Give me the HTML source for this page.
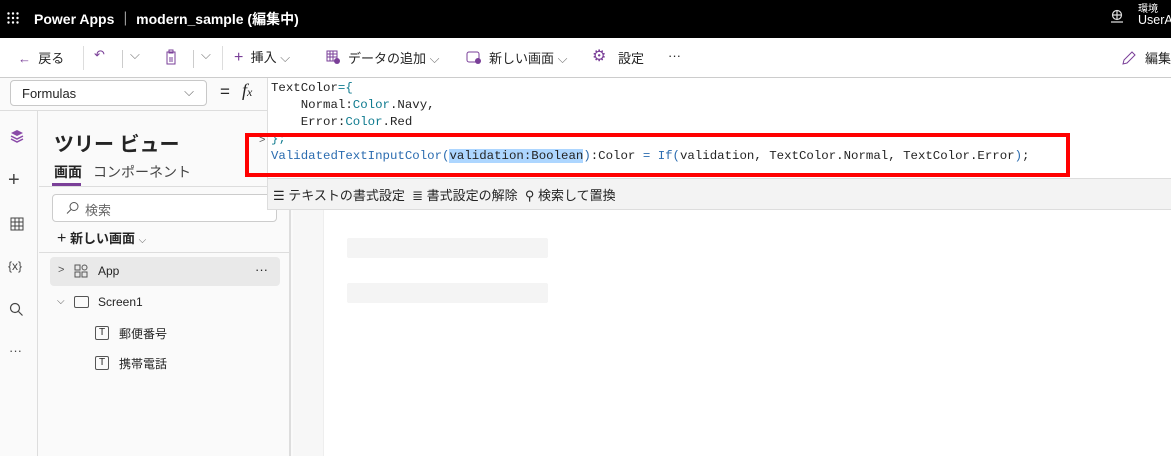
<!DOCTYPE html>
<html><head><meta charset="utf-8"><style>
*{box-sizing:border-box;margin:0;padding:0}
body{width:1171px;height:456px;overflow:hidden;background:#fff;font-family:"Liberation Sans","Noto Sans CJK JP",sans-serif;position:relative;color:#242424}
.a{position:absolute}
.mono{font-family:"Liberation Mono",monospace;font-size:12.4px;white-space:pre;line-height:17px}
.k{color:#0f7b8f}.b{color:#2b6cb0}
.tb{font-size:13px;color:#242424}
</style></head><body>
<!-- header -->
<div class="a" style="left:0;top:0;width:1171px;height:38px;background:#000"></div>
<svg class="a" style="top:12px;left:7px" width="12" height="12"><g fill="#fff"><circle cx="1.5" cy="1.5" r="1.2"/><circle cx="6" cy="1.5" r="1.2"/><circle cx="10.5" cy="1.5" r="1.2"/><circle cx="1.5" cy="6" r="1.2"/><circle cx="6" cy="6" r="1.2"/><circle cx="10.5" cy="6" r="1.2"/><circle cx="1.5" cy="10.5" r="1.2"/><circle cx="6" cy="10.5" r="1.2"/><circle cx="10.5" cy="10.5" r="1.2"/></g></svg>
<div class="a" style="left:34px;top:9px;color:#fff;font-size:14px;font-weight:bold">Power Apps ｜ modern_sample (編集中)</div>
<svg class="a" style="left:1109px;top:9px" width="16" height="16"><g fill="none" stroke="#ddd" stroke-width="1.2"><circle cx="8" cy="6" r="4.5"/><path d="M3.5 6h9M8 1.5v9M2 13h12"/></g></svg>
<div class="a" style="left:1138px;top:0px;color:#fff;font-size:10px">環境</div>
<div class="a" style="left:1138px;top:13px;color:#fff;font-size:12.5px">UserA</div>
<!-- toolbar -->
<div class="a tb" style="left:18px;top:48px"><span style="color:#7a3f98">←</span>&nbsp; 戻る</div>
<div class="a" style="left:83px;top:46px;width:1px;height:24px;background:#ddd"></div>
<div class="a tb" style="left:94px;top:47px;color:#7a3f98">↶</div>
<div class="a" style="left:122px;top:50px;width:1px;height:18px;background:#ccc"></div>
<div class="a tb" style="left:130px;top:47px;color:#777">⌵</div>
<svg class="a" style="left:164px;top:49px" width="14" height="16"><path d="M3 3h8v12H3z M5 1h4v3H5z M6 8v5M8 8v5" fill="none" stroke="#7a3f98" stroke-width="1"/></svg>
<div class="a" style="left:193px;top:50px;width:1px;height:18px;background:#ccc"></div>
<div class="a tb" style="left:201px;top:47px;color:#777">⌵</div>
<div class="a" style="left:222px;top:46px;width:1px;height:24px;background:#ddd"></div>
<div class="a tb" style="left:234px;top:47px"><span style="color:#7a3f98;font-size:16px">+</span>&nbsp; 挿入 <span style="color:#777">⌵</span></div>
<svg class="a" style="left:326px;top:50px" width="15" height="15"><path d="M1 1h10v10H1zM1 4h10M1 7h10M4 1v10M7 1v10" fill="none" stroke="#7a3f98"/><circle cx="11" cy="11" r="3" fill="#7a3f98"/></svg>
<div class="a tb" style="left:348px;top:48px">データの追加 <span style="color:#777">⌵</span></div>
<svg class="a" style="left:466px;top:50px" width="16" height="15"><rect x="1" y="2" width="12" height="10" rx="2" fill="none" stroke="#7a3f98"/><circle cx="12" cy="11" r="3" fill="#7a3f98"/></svg>
<div class="a tb" style="left:489px;top:48px">新しい画面 <span style="color:#777">⌵</span></div>
<div class="a" style="left:592px;top:46px;color:#7a3f98;font-size:16px">⚙</div>
<div class="a tb" style="left:618px;top:48px">設定</div>
<div class="a tb" style="left:668px;top:48px">···</div>
<svg class="a" style="left:1121px;top:50px" width="16" height="16"><path d="M2 14l1-4 8-8 3 3-8 8z" fill="none" stroke="#7a3f98"/></svg>
<div class="a tb" style="left:1145px;top:48px">編集</div>
<div class="a" style="left:0;top:77px;width:1171px;height:1px;background:#ccc"></div>
<!-- formula row -->
<div class="a" style="left:0;top:78px;width:1171px;height:378px;background:#fafafa"></div>
<div class="a" style="left:10px;top:80px;width:197px;height:26px;border:1px solid #c8c8c8;border-radius:4px;background:#fff;font-size:13px;padding:5px 0 0 11px">Formulas<span style="position:absolute;right:12px;top:3px;color:#666">⌵</span></div>
<div class="a" style="left:220px;top:82px;font-size:17px">=</div>
<div class="a" style="left:242px;top:80px;font-size:18px;font-style:italic;font-family:'Liberation Serif',serif">f<span style="font-size:12px">x</span></div>
<!-- left rail -->
<div class="a" style="left:0;top:111px;width:38px;height:345px;background:#fafafa;border-right:1px solid #ddd"></div>
<div class="a" style="left:0;top:110px;width:1171px;height:1px;background:#ddd"></div>
<svg class="a" style="left:10px;top:129px" width="14" height="14"><path d="M7 1l6 3-6 3-6-3z" fill="#8a4aa8"/><path d="M1 7l6 3 6-3M1 10l6 3 6-3" fill="none" stroke="#8a4aa8" stroke-width="1.5"/></svg>
<div class="a" style="left:8px;top:169px;font-size:20px;color:#444;font-weight:300">+</div>
<svg class="a" style="left:10px;top:217px" width="14" height="14"><path d="M1 1h12v12H1zM1 5h12M1 9h12M5 1v12M9 1v12" fill="none" stroke="#444"/></svg>
<div class="a" style="left:8px;top:259px;font-size:12px;color:#444">{x}</div>
<svg class="a" style="left:9px;top:302px" width="15" height="15"><circle cx="6" cy="6" r="4.5" fill="none" stroke="#444" stroke-width="1.2"/><path d="M9.5 9.5l4 4" stroke="#444" stroke-width="1.2"/></svg>
<div class="a" style="left:9px;top:343px;font-size:13px;color:#444">···</div>
<!-- tree -->
<div class="a" style="left:39px;top:111px;width:252px;height:345px;background:#fafafa;border-right:2px solid #ddd"></div>
<div class="a" style="left:54px;top:128px;font-size:20px;font-weight:bold">ツリー ビュー</div>
<div class="a" style="left:54px;top:162px;font-size:14px;font-weight:bold">画面</div>
<div class="a" style="left:52px;top:183px;width:29px;height:3px;background:#7a3f98"></div>
<div class="a" style="left:93px;top:162px;font-size:14px;color:#444">コンポーネント</div>
<div class="a" style="left:39px;top:186px;width:252px;height:1px;background:#ddd"></div>
<div class="a" style="left:52px;top:194px;width:225px;height:28px;border:1px solid #ccc;border-radius:4px;background:#fff;font-size:13px;color:#666;padding:5px 0 0 32px">検索</div>
<svg class="a" style="left:66px;top:201px" width="14" height="14"><circle cx="8" cy="5.5" r="4" fill="none" stroke="#555"/><path d="M5 8.5l-4 4" stroke="#555"/></svg>
<div class="a" style="left:57px;top:228px;font-size:13px;font-weight:bold"><span style="font-weight:normal;font-size:16px">+</span> 新しい画面 <span style="font-weight:normal;color:#666;font-size:10px">⌵</span></div>
<div class="a" style="left:39px;top:252px;width:252px;height:1px;background:#ddd"></div>
<div class="a" style="left:50px;top:257px;width:230px;height:29px;background:#e9e9e9;border-radius:4px"></div>
<div class="a" style="left:58px;top:264px;font-size:11px;color:#555">&gt;</div>
<svg class="a" style="left:74px;top:264px" width="14" height="14"><path d="M1 1h5v5H1zM1 8h5v5H1zM8 8h5v5H8z" fill="none" stroke="#555"/><circle cx="10.5" cy="3.5" r="2.5" fill="none" stroke="#555"/></svg>
<div class="a" style="left:98px;top:264px;font-size:12px">App</div>
<div class="a" style="left:255px;top:262px;font-size:13px">···</div>
<div class="a" style="left:57px;top:296px;font-size:10px;color:#555">⌵</div>
<div class="a" style="left:74px;top:296px;width:15px;height:12px;border:1px solid #555;border-radius:2px"></div>
<div class="a" style="left:98px;top:295px;font-size:12px">Screen1</div>
<div class="a" style="left:95px;top:326px;width:14px;height:14px;border:1px solid #555;border-radius:2px;font-size:10px;text-align:center;line-height:12px">T</div>
<div class="a" style="left:119px;top:325px;font-size:12px">郵便番号</div>
<div class="a" style="left:95px;top:356px;width:14px;height:14px;border:1px solid #555;border-radius:2px;font-size:10px;text-align:center;line-height:12px">T</div>
<div class="a" style="left:119px;top:355px;font-size:12px">携帯電話</div>
<!-- canvas -->
<div class="a" style="left:293px;top:210px;width:31px;height:246px;background:#f7f7f7;border-right:1px solid #eee"></div>
<div class="a" style="left:324px;top:210px;width:847px;height:246px;background:#fff"></div>
<div class="a" style="left:347px;top:238px;width:201px;height:20px;background:#f4f4f4;border-radius:2px"></div>
<div class="a" style="left:347px;top:283px;width:201px;height:20px;background:#f4f4f4;border-radius:2px"></div>
<!-- editor -->
<div class="a" style="left:267px;top:78px;width:904px;height:100px;background:#fff;border-left:1px solid #ddd"></div>
<div class="a" style="left:267px;top:178px;width:904px;height:32px;background:#f3f3f3;border:1px solid #ddd;border-right:none"></div>
<div class="a mono" style="left:271px;top:80px">TextColor<span class="k">={</span>
    Normal:<span class="k">Color</span>.Navy,
    Error:<span class="k">Color</span>.Red
<span class="k">};</span>
<span class="b">ValidatedTextInputColor(</span><span style="background:#add6ff">validation:Boolean</span><span class="b">)</span>:Color <span class="b">=</span> <span class="b">If(</span>validation, TextColor.Normal, TextColor.Error<span class="b">)</span>;</div>
<div class="a" style="left:259px;top:134px;font-size:11px;color:#555">&gt;</div>
<div class="a" style="left:245px;top:133px;width:825px;height:44px;border:4px solid #f00"></div>
<div class="a tb" style="left:273px;top:185px">☰ テキストの書式設定 &nbsp;≣ 書式設定の解除 &nbsp;⚲ 検索して置換</div>
</body></html>
